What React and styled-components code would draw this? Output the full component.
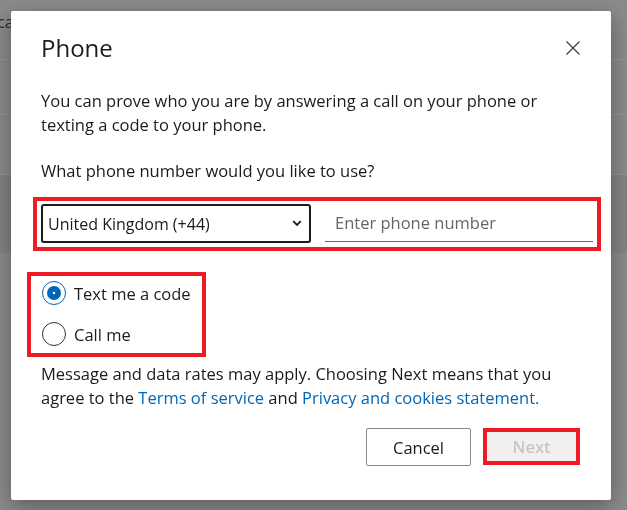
import React, { useState } from 'react'
import styled, { createGlobalStyle } from 'styled-components'

const GlobalStyle = createGlobalStyle`
  html, body {
    margin: 0;
    padding: 0;
    background: #8b8b8b;
    font-family: "Open Sans", "Noto Sans", "Liberation Sans", sans-serif;
  }
  * { box-sizing: border-box; }
`

function App() {
  const [method, setMethod] = useState('text')
  const [country, setCountry] = useState('44')

  return (
    <>
      <GlobalStyle />
      <Backdrop>
        <BackRow height={60}>
          <BackText>ca</BackText>
        </BackRow>
        <BackRow height={55} />
        <BackRow height={60} />
        <BackBand />
      </Backdrop>

      <Overlay>
        <Dialog>
          <Header>
            <Title>Phone</Title>
            <CloseButton aria-label="Close">
              <svg width="16" height="16" viewBox="0 0 16 16">
                <path d="M1.5 1.5 L14.5 14.5 M14.5 1.5 L1.5 14.5" stroke="#3b3b3b" strokeWidth="1.2" fill="none" />
              </svg>
            </CloseButton>
          </Header>

          <Text>
            You can prove who you are by answering a call on your phone or<br />
            texting a code to your phone.
          </Text>

          <Question>What phone number would you like to use?</Question>

          <PhoneRow>
            <SelectWrap>
              <Select value={country} onChange={e => setCountry(e.target.value)}>
                <option value="44">United Kingdom (+44)</option>
                <option value="1">United States (+1)</option>
              </Select>
              <Chevron width="10" height="7" viewBox="0 0 10 7">
                <path d="M1.2 1.2 L5 5 L8.8 1.2" stroke="#1b1b1b" strokeWidth="1.8" fill="none" />
              </Chevron>
            </SelectWrap>
            <PhoneInput placeholder="Enter phone number" />
          </PhoneRow>

          <RadioBox>
            <RadioRow onClick={() => setMethod('text')}>
              <Radio checked={method === 'text'} />
              <span>Text me a code</span>
            </RadioRow>
            <RadioRow onClick={() => setMethod('call')}>
              <Radio checked={method === 'call'} />
              <span>Call me</span>
            </RadioRow>
          </RadioBox>

          <Notice>
            Message and data rates may apply. Choosing Next means that you<br />
            agree to the <Link href="#">Terms of service</Link> and <Link href="#">Privacy and cookies statement.</Link>
          </Notice>

          <Actions>
            <Button>Cancel</Button>
            <NextButton disabled>Next</NextButton>
          </Actions>
        </Dialog>
      </Overlay>
    </>
  )
}

export default App

const Backdrop = styled.div`
  height: 510px;
  display: flex;
  flex-direction: column;
  overflow: hidden;
`
const BackRow = styled.div`
  height: ${props => props.height}px;
  border-bottom: 1px solid #959595;
  padding: 11px 0 0 0;
`
const BackText = styled.div`
  font-size: 16px;
  color: #2a2a2a;
  margin-left: -3px;
`
const BackBand = styled.div`
  height: 78px;
  background: #838383;
`
const Overlay = styled.div`
  position: fixed;
  inset: 0;
  padding: 11px 0 0 11px;
  display: flex;
  align-items: flex-start;
`
const Dialog = styled.div`
  width: 600px;
  height: 489px;
  background: #fff;
  border-radius: 2px;
  box-shadow: 0 6px 22px rgba(0, 0, 0, 0.35);
  padding: 21px 18px 34px 30px;
  display: flex;
  flex-direction: column;
  color: #1b1b1b;
`
const Header = styled.div`
  display: flex;
  align-items: center;
  justify-content: space-between;
  height: 32px;
`
const Title = styled.h1`
  margin: 0;
  font-size: 24px;
  font-weight: 400;
  line-height: 32px;
  color: #1b1b1b;
`
const CloseButton = styled.button`
  width: 32px;
  height: 32px;
  margin-right: 4px;
  border: none;
  background: transparent;
  display: flex;
  align-items: center;
  justify-content: center;
  padding: 0;
  cursor: pointer;
`
const Text = styled.p`
  margin: 25px 0 0 0;
  font-size: 16.5px;
  line-height: 24px;
  white-space: nowrap;
`
const Question = styled(Text)`
  margin-top: 22px;
`
const Highlight = styled.div`
  border: 4px solid #ed1c24;
`
const PhoneRow = styled(Highlight)`
  margin: 14px -8px 0 -8px;
  padding: 3px 4px 4px 4px;
  display: flex;
  gap: 14px;
`
const SelectWrap = styled.div`
  position: relative;
  flex: none;
  width: 270px;
  display: flex;
`
const Select = styled.select`
  appearance: none;
  width: 100%;
  height: 39px;
  border: 2px solid #1b1b1b;
  border-radius: 3px;
  background: #fff;
  padding: 0 30px 0 5px;
  font-family: inherit;
  font-size: 16px;
  color: #1b1b1b;
  outline: none;
`
const Chevron = styled.svg`
  position: absolute;
  right: 9px;
  top: 16px;
  pointer-events: none;
`
const PhoneInput = styled.input`
  flex: 1;
  min-width: 0;
  height: 38px;
  border: none;
  border-bottom: 1px solid #666;
  padding: 0 10px;
  font-family: inherit;
  font-size: 16.5px;
  color: #1b1b1b;
  outline: none;
  &::placeholder {
    color: #666;
  }
`
const RadioBox = styled(Highlight)`
  align-self: flex-start;
  margin: 21px 0 0 -14px;
  padding: 1px 11px 3px 11px;
  display: flex;
  flex-direction: column;
  gap: 9px;
`
const RadioRow = styled.label`
  display: flex;
  align-items: center;
  gap: 8px;
  height: 32px;
  font-size: 16.5px;
  cursor: pointer;
`
const Radio = styled.span`
  width: 24px;
  height: 24px;
  border-radius: 50%;
  border: 1px solid ${props => props.checked ? '#0067b8' : '#333'};
  flex: none;
  display: flex;
  align-items: center;
  justify-content: center;
  &::after {
    content: '';
    display: ${props => props.checked ? 'block' : 'none'};
    width: 14px;
    height: 14px;
    border-radius: 50%;
    background: radial-gradient(circle, #fff 0 1.2px, #0067b8 1.6px);
  }
`
const Notice = styled(Text)`
  margin-top: 5px;
`
const Link = styled.a`
  color: #0067b8;
  text-decoration: none;
`
const Actions = styled.div`
  margin: 18px 13px 0 0;
  display: flex;
  justify-content: flex-end;
  gap: 12px;
`
const Button = styled.button`
  width: 105px;
  height: 38px;
  border: 1px solid #8a8a8a;
  border-radius: 2px;
  background: #fff;
  font-family: inherit;
  font-size: 16.5px;
  color: #1b1b1b;
  cursor: pointer;
`
const NextButton = styled(Button)`
  width: 97px;
  height: 37px;
  border: 4px solid #ed1c24;
  border-radius: 0;
  background: #f2f0ef;
  color: #c8c6c4;
  font-weight: 600;
  cursor: default;
`
